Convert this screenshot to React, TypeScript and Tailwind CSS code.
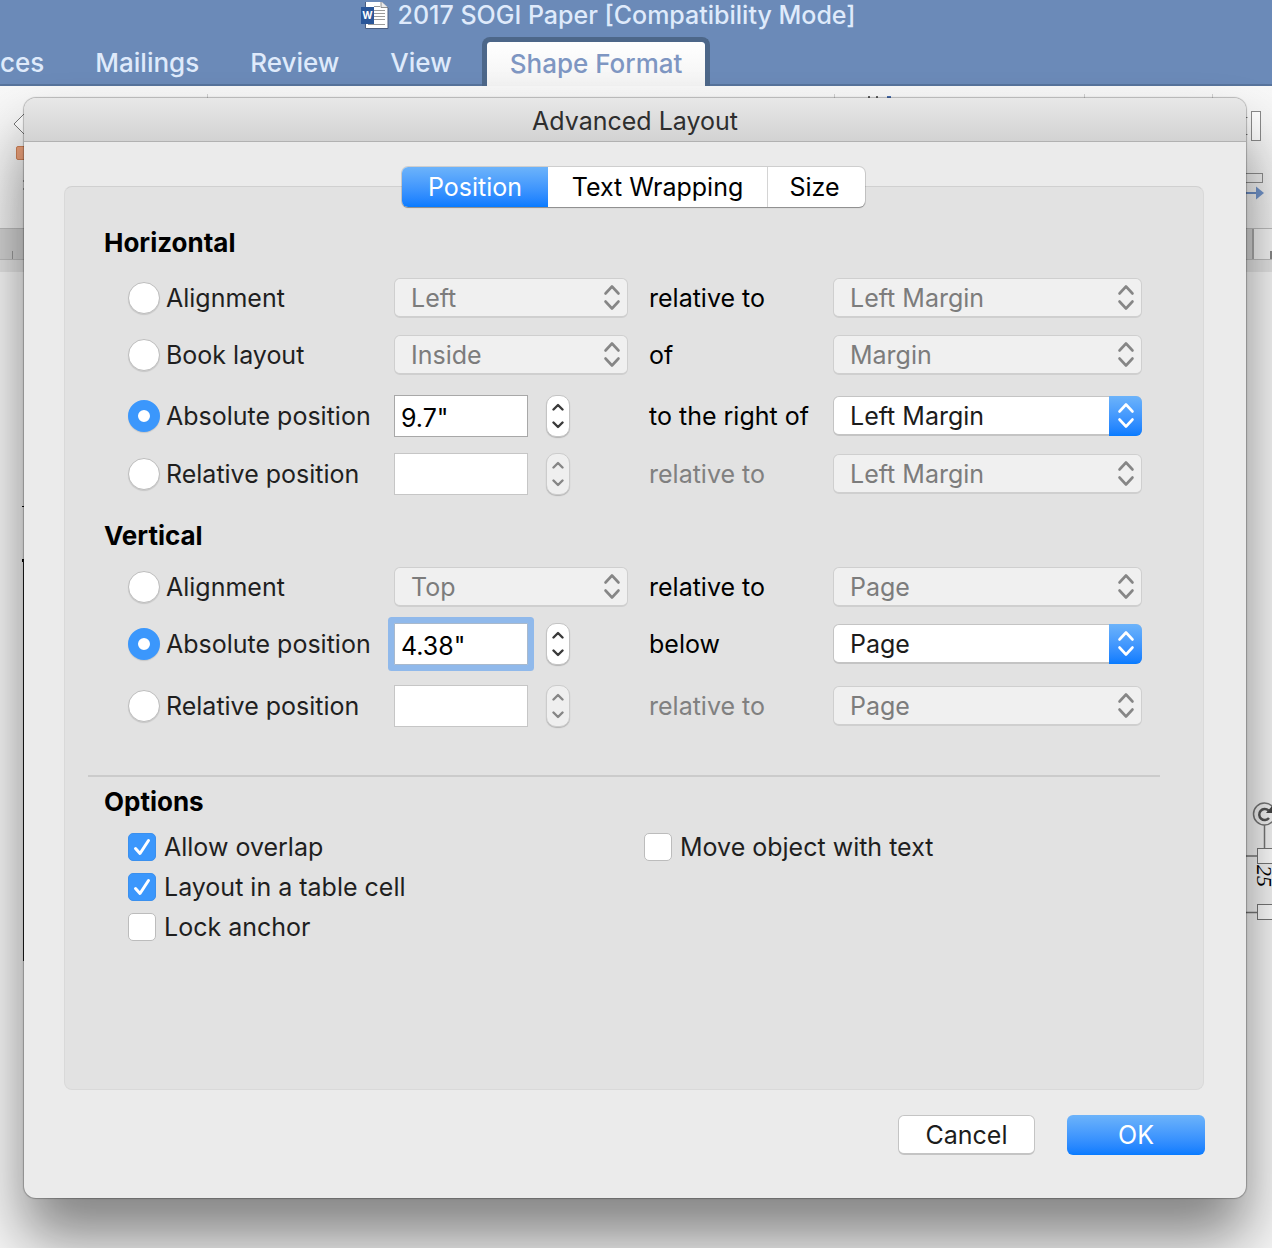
import type { ReactNode } from "react";

function UpDown() {
  return (
    <svg viewBox="0 0 18 28" className="h-7 w-[18px]" fill="none" stroke="currentColor" strokeWidth="2.6" strokeLinecap="round" strokeLinejoin="round" aria-hidden="true">
      <path d="M2.5 9.5 L9 2.500 L15.5 9.5 M2.5 17.5 L9 24.5 L15.5 17.5" />
    </svg>
  );
}

function Popup({ label, value, enabled = false }: { label: string; value: string; enabled?: boolean }) {
  return (
    <div className="relative w-full">
      <select
        aria-label={label}
        disabled={!enabled}
        className={`block h-10 w-full appearance-none rounded-md border border-b-2 pl-4 pr-10 text-[25px] leading-8 opacity-100 outline-none ${
          enabled ? "border-[#c4c4c4] bg-white text-[#1c1c1c]" : "border-[#cfcfcf] bg-[#f0f0f0] text-[#7c7c7c]"
        }`}
      >
        <option>{value}</option>
      </select>
      <span
        className={`pointer-events-none absolute inset-y-0 right-0 flex w-[33px] items-center justify-center rounded-r-md ${
          enabled ? "bg-linear-to-b from-[#6cb3fa] to-[#067bff] text-white" : "text-[#868686]"
        }`}
      >
        <UpDown />
      </span>
    </div>
  );
}

function Stepper({ name, enabled }: { name: string; enabled: boolean }) {
  return (
    <div
      className={`flex h-[42px] w-6 flex-col overflow-hidden rounded-[10px] border py-0.5 shadow-[0_1px_1px_rgba(0,0,0,0.2)] ${
        enabled ? "border-[#c4c4c4] bg-white text-[#3a3a3a]" : "border-[#cccccc] bg-[#efefef] text-[#868686]"
      }`}
    >
      {[true, false].map((up) => (
        <button key={String(up)} type="button" disabled={!enabled} aria-label={`${up ? "Increase" : "Decrease"} ${name}`} className="flex flex-1 items-center justify-center">
          <svg viewBox="0 0 12 8" className="h-2 w-3" fill="none" stroke="currentColor" strokeWidth="2.4" strokeLinecap="round" strokeLinejoin="round">
            <path d={up ? "M1.5 6.5 L6 2 L10.5 6.5" : "M1.5 1.5 L6 6 L10.5 1.5"} />
          </svg>
        </button>
      ))}
    </div>
  );
}

function Measure({ name, value, enabled = false, focused = false }: { name: string; value: string; enabled?: boolean; focused?: boolean }) {
  return (
    <div className="flex items-center gap-[18px]">
      <input
        type="text"
        aria-label={name}
        defaultValue={value}
        disabled={!enabled}
        className={`h-[42px] w-[134px] border bg-white px-[6px] pt-1 text-[25px] leading-8 text-black outline-none ${
          focused ? "rounded-[1px] border-[#a9b9cc] ring-[6px] ring-[#90b9eb]" : enabled ? "border-[#a8a8a8]" : "border-[#c6c6c6]"
        }`}
      />
      <Stepper name={name} enabled={enabled} />
    </div>
  );
}

function Row({
  group,
  label,
  checked = false,
  control,
  relation,
  dim = false,
  target,
  className,
}: {
  group: string;
  label: string;
  checked?: boolean;
  control: ReactNode;
  relation: string;
  dim?: boolean;
  target: string;
  className: string;
}) {
  return (
    <div className={`grid h-10 grid-cols-[266px_255px_184px_minmax(0,1fr)] items-center pl-[63px] pr-[61px] ${className}`}>
      <label className="flex items-center gap-[6px] whitespace-nowrap text-[#1f1f1f]">
        <input
          type="radio"
          name={group}
          defaultChecked={checked}
          className="size-8 shrink-0 appearance-none rounded-full border border-[#bdbdbd] bg-white shadow-[0_1px_1px_rgba(0,0,0,0.12)] checked:border-[10px] checked:border-[#3b97fc]"
        />
        {label}
      </label>
      <div className="w-[234px]">{control}</div>
      <span className={`whitespace-nowrap ${dim ? "text-[#808080]" : "text-black"}`}>{relation}</span>
      <Popup label={`${group} ${label} ${relation}`} value={target} enabled={checked} />
    </div>
  );
}

function Check({ label, checked = false }: { label: string; checked?: boolean }) {
  return (
    <label className="flex h-8 items-center gap-2 text-[#1f1f1f]">
      <span className="relative size-7 shrink-0">
        <input
          type="checkbox"
          defaultChecked={checked}
          className="peer block size-7 appearance-none rounded-[5px] border border-[#bcbcbc] bg-white checked:border-[#3b90ee] checked:bg-[#3b97fc]"
        />
        <svg viewBox="0 0 28 28" className="pointer-events-none absolute inset-0 hidden size-7 peer-checked:block" fill="none" stroke="white" strokeWidth="3" strokeLinecap="round" strokeLinejoin="round" aria-hidden="true">
          <path d="M7.5 15.5 L12 20.5 L20.5 7.5" />
        </svg>
      </span>
      {label}
    </label>
  );
}

function WordIcon() {
  return (
    <svg viewBox="0 0 28 27" className="h-[27px] w-7" aria-hidden="true">
      <path d="M4.500 -1 H20 L27 6 V26.500 H4.500 Z" fill="#fff" stroke="#4a5d80" />
      <path d="M20 -1 V5.500 H27" fill="#e9e9e9" stroke="#777" strokeWidth=".8" />
      <path d="M13 4.500h6M13 8.500h11M13 11.500h11M13 14.500h11M13 17.500h11M7 22.500h17" stroke="#9b9b9b" strokeWidth="1" />
      <rect x="0" y="5" width="13" height="17" fill="#2a5699" />
      <text x="6.500" y="17" textAnchor="middle" fontSize="10" fontWeight="700" fill="#fff" fontFamily="Inter, sans-serif">W</text>
    </svg>
  );
}

function AppHeader() {
  return (
    <header className="flex h-[86px] flex-col justify-between border-b-2 border-[#58749c] bg-[#6b8ab8] font-medium text-[#dfeafb]">
      <div className="flex h-[30px] items-center justify-center gap-[9px] pr-[56px] text-[25px] leading-[30px]">
        <WordIcon />
        <span className="whitespace-nowrap">2017 SOGI Paper [Compatibility Mode]</span>
      </div>
      <nav className="-mb-0.5 flex h-[49px] items-stretch gap-[51px] text-[26px]">
        <button type="button" className="pt-0.5">ces</button>
        <button type="button" className="pt-0.5">Mailings</button>
        <button type="button" className="pt-0.5">Review</button>
        <button type="button" className="pt-0.5">View</button>
        <button type="button" className="-ml-[21px] whitespace-nowrap rounded-t-lg border-x-[5px] border-t-[5px] border-[#4d6789] bg-linear-to-b from-white to-[#f3f3f3] bg-clip-padding px-[23px] pb-0.5 text-[#7e96c2]">
          Shape Format
        </button>
      </nav>
    </header>
  );
}

function Ribbon() {
  return (
    <div className="flex h-[142px] justify-between bg-linear-to-b from-[#f8f8f8] to-[#f0f0f0]">
      <svg viewBox="0 0 24 142" className="h-[142px] w-6 shrink-0" aria-hidden="true">
        <path d="M24 28 L14 38 L24 48" fill="#fff" stroke="#777" />
        <rect x="16.500" y="60.500" width="14" height="13" rx="1.500" fill="#eda27b" stroke="#cf8056" />
        <path d="M23 95h1M23 103h1" stroke="#555" />
      </svg>
      <div className="flex flex-1 items-start pt-2">
        <span className="ml-[183px] h-1 w-px bg-[#cfcfcf]" />
        <span className="ml-[626px] h-1 w-px bg-[#cfcfcf]" />
        <span className="ml-[33px] mt-[2px] h-0.5 w-0.5 bg-[#666]" />
        <span className="ml-[6px] mt-[2px] h-0.5 w-0.5 bg-[#666]" />
        <span className="ml-[9px] mt-[2px] h-0.5 w-1 bg-[#4a6fb0]" />
        <span className="ml-[193px] h-1 w-px bg-[#cfcfcf]" />
        <span className="ml-[127px] h-1 w-px bg-[#cfcfcf]" />
      </div>
      <svg viewBox="0 0 26 142" className="h-[142px] w-[26px] shrink-0" aria-hidden="true">
        <path d="M0 31.500h1.500M0 48.500h1.500" stroke="#777" />
        <rect x="5.500" y="25.500" width="9" height="29" fill="#fff" stroke="#8a8a8a" />
        <rect x="-2" y="87.500" width="18.500" height="9" fill="#f2f2f2" stroke="#8f8f8f" />
        <path d="M0 107h10" stroke="#6d8fc6" strokeWidth="2" />
        <path d="M10 100.500 L18 107 L10 113.500 Z" fill="#7396cc" />
      </svg>
    </div>
  );
}

function Document() {
  return (
    <>
      <div className="flex h-8 justify-between border-y border-[#bdbdbd] bg-[#d2d2d2]">
        <span className="ml-3 mt-[22px] h-2 w-px bg-[#999]" />
        <span className="flex w-5 items-end justify-end border-l-2 border-[#a8a8a8] bg-[#f4f4f4]">
          <span className="h-2 w-0.5 bg-[#888]" />
        </span>
      </div>
      <div className="h-3 bg-[#e4e4e4]" />
      <div className="flex flex-1 justify-between bg-[#f6f6f6]">
        <svg viewBox="0 0 24 700" className="h-[700px] w-6" aria-hidden="true">
          <path d="M22 234.500h2" stroke="#000" />
          <path d="M22 288.500h2" stroke="#000" strokeWidth="3" />
          <path d="M23.500 288v401" stroke="#222" />
        </svg>
        <svg viewBox="0 0 26 700" className="h-[700px] w-[26px]" aria-hidden="true">
          <circle cx="18.500" cy="542" r="11" fill="#f4f4f4" stroke="#777" strokeWidth="1.500" />
          <path d="M22.500 538.500 A5.500 5.500 0 1 0 23 546" fill="none" stroke="#555" strokeWidth="2.500" />
          <path d="M20 541 L27 541 L26 534 Z" fill="#444" />
          <path d="M18.500 553v23M0 584h11M0 640.500h11" stroke="#777" strokeWidth="1.500" />
          <rect x="11.500" y="576.500" width="18" height="15" fill="#fff" stroke="#777" />
          <rect x="11.500" y="632.500" width="18" height="15" fill="#fff" stroke="#777" />
          <text transform="translate(11 593) rotate(90)" fontSize="22" fontStyle="italic" fontFamily="'Liberation Serif', serif" fill="#000">25</text>
        </svg>
      </div>
    </>
  );
}

export default function App() {
  return (
    <div className="relative flex min-h-screen flex-col overflow-hidden font-[Inter,sans-serif]">
      <AppHeader />
      <Ribbon />
      <Document />

      <div
        role="dialog"
        aria-labelledby="dialog-title"
        className="absolute left-6 right-[26px] top-[98px] flex flex-col rounded-xl bg-[#ebebeb] pb-[43px] text-[25px] leading-8 shadow-[0_0_1px_1px_rgba(0,0,0,0.25),0_40px_60px_rgba(0,0,0,0.47)]"
      >
        <h1 id="dialog-title" className="flex h-11 items-center justify-center rounded-t-xl border-b border-[#b1b1b1] bg-linear-to-b from-[#e8e8e8] to-[#d2d2d2] pt-0.5 text-[#2e2e2e]">
          Advanced Layout
        </h1>

        <div className="relative z-10 mr-[3px] mt-[25px] flex h-10 justify-center">
          <div role="tablist" className="flex rounded-md bg-white shadow-[0_0_0_1px_rgba(0,0,0,0.12),0_1px_1px_rgba(0,0,0,0.3)]">
            <button type="button" role="tab" aria-selected="true" className="w-[146px] rounded-l-md bg-linear-to-b from-[#6cb3fa] to-[#067bff] text-white">
              Position
            </button>
            <button type="button" role="tab" aria-selected="false" className="w-[219px] whitespace-nowrap text-black">
              Text Wrapping
            </button>
            <button type="button" role="tab" aria-selected="false" className="w-[98px] rounded-r-md border-l border-[#d4d4d4] pr-1 text-black">
              Size
            </button>
          </div>
        </div>

        <section className="-mt-[21px] ml-10 mr-[42px] rounded-lg border border-[#d9d9d9] border-t-[#d0d0d0] bg-[#e2e2e2] pb-[146px] pt-10">
          <h2 className="pl-[39px] text-[26px] font-bold text-black">Horizontal</h2>
          <Row group="Horizontal" label="Alignment" control={<Popup label="Horizontal alignment" value="Left" />} relation="relative to" target="Left Margin" className="mt-[19px]" />
          <Row group="Horizontal" label="Book layout" control={<Popup label="Book layout side" value="Inside" />} relation="of" target="Margin" className="mt-[17px]" />
          <Row group="Horizontal" label="Absolute position" checked control={<Measure name="Horizontal absolute position" value={'9.7"'} enabled />} relation="to the right of" target="Left Margin" className="mt-5" />
          <Row group="Horizontal" label="Relative position" control={<Measure name="Horizontal relative position" value="" />} relation="relative to" dim target="Left Margin" className="mt-[18px]" />

          <h2 className="mt-[27px] pl-[39px] text-[26px] font-bold text-black">Vertical</h2>
          <Row group="Vertical" label="Alignment" control={<Popup label="Vertical alignment" value="Top" />} relation="relative to" target="Page" className="mt-[15px]" />
          <Row group="Vertical" label="Absolute position" checked control={<Measure name="Vertical absolute position" value={'4.38"'} enabled focused />} relation="below" target="Page" className="mt-4" />
          <Row group="Vertical" label="Relative position" control={<Measure name="Vertical relative position" value="" />} relation="relative to" dim target="Page" className="mt-[22px]" />

          <hr className="ml-[23px] mr-[43px] mt-[50px] border-t-2 border-[#cbcbcb]" />

          <h2 className="mt-[9px] pl-[39px] text-[26px] font-bold text-black">Options</h2>
          <div className="mt-[13px] grid grid-cols-[516px_minmax(0,1fr)] pl-[63px]">
            <div className="flex flex-col gap-2">
              <Check label="Allow overlap" checked />
              <Check label="Layout in a table cell" checked />
              <Check label="Lock anchor" />
            </div>
            <Check label="Move object with text" />
          </div>
        </section>

        <div className="mt-[25px] flex justify-end gap-8 pr-[41px]">
          <button type="button" className="h-10 w-[137px] rounded-md border border-b-2 border-[#c4c4c4] bg-white text-[#1c1c1c]">
            Cancel
          </button>
          <button type="button" className="h-10 w-[138px] rounded-md bg-linear-to-b from-[#6cb3fa] to-[#067bff] text-white">
            OK
          </button>
        </div>
      </div>
    </div>
  );
}
